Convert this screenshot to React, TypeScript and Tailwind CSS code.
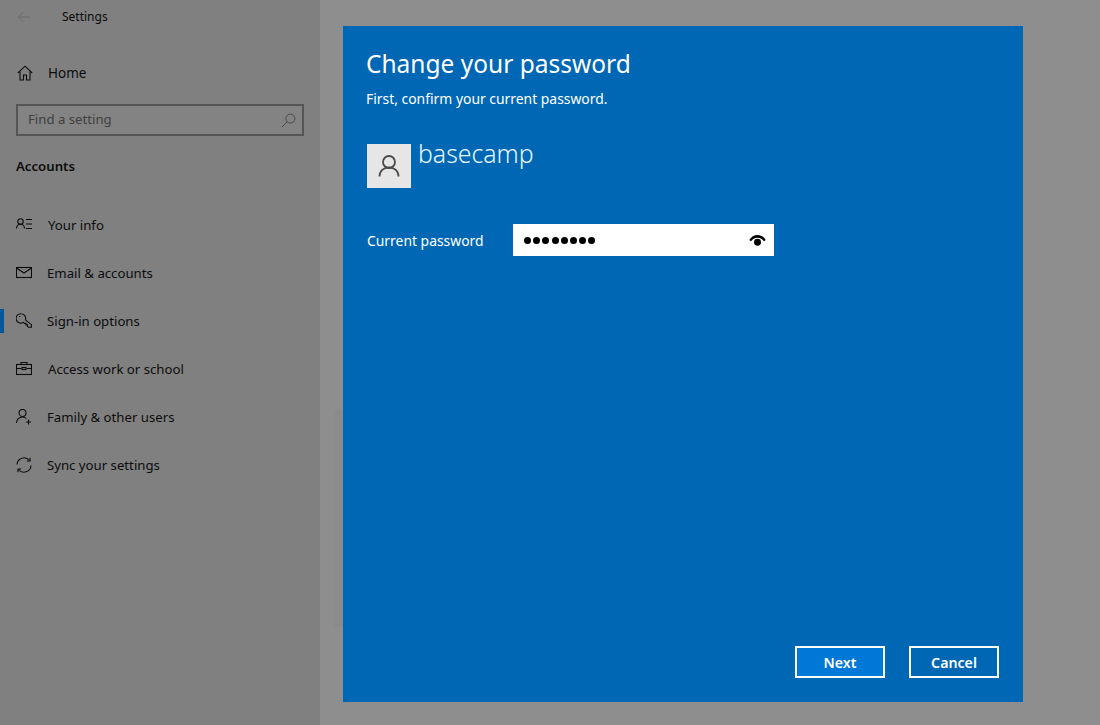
import { ReactNode } from 'react';

function Icon({ children, className }: { children: ReactNode; className?: string }) {
  return (
    <svg
      viewBox="0 0 16 16"
      fill="none"
      stroke="currentColor"
      strokeWidth="1.1"
      className={className ?? 'h-4 w-4 shrink-0 text-[#0c0c0c]'}
    >
      {children}
    </svg>
  );
}

const navItems: { label: string; icon: ReactNode; active?: boolean; textLeft: string }[] = [
  {
    label: 'Your info',
    textLeft: 'pl-[16px]',
    icon: (
      <Icon>
        <circle cx="4.5" cy="4.5" r="2.7" />
        <path d="M0.500 11.500c0-2.500 1.800-4.300 4-4.300s4 1.800 4 4.300" />
        <path d="M10 2.500h6M10 7h6M10 11.500h6" />
      </Icon>
    ),
  },
  {
    label: 'Email & accounts',
    textLeft: 'pl-[15px]',
    icon: (
      <Icon>
        <rect x="0.5" y="2.5" width="15" height="10" />
        <path d="M0.5 3l7.5 5 7.5-5" />
      </Icon>
    ),
  },
  {
    label: 'Sign-in options',
    textLeft: 'pl-[15px]',
    active: true,
    icon: (
      <Icon>
        <path d="M5.500 0.800a4.700 4.700 0 1 0 1.800 8.600l1.200 1h1.500v1.500h1.500v1.500l1 .900h2.900v-2.600L9.500 6.800A4.700 4.700 0 0 0 5.500.8z" />
        <path d="M3 3.500h1.500" />
      </Icon>
    ),
  },
  {
    label: 'Access work or school',
    textLeft: 'pl-[16px]',
    icon: (
      <Icon>
        <rect x="0.5" y="3.5" width="15" height="10" />
        <path d="M5 3.500V1.500h6v2" />
        <path d="M0.500 7.500h5M10.500 7.500h5" />
        <rect x="6" y="6.500" width="4" height="2" />
      </Icon>
    ),
  },
  {
    label: 'Family & other users',
    textLeft: 'pl-[15px]',
    icon: (
      <Icon>
        <circle cx="6.500" cy="4" r="3.500" />
        <path d="M0.500 14c0-3.400 2.700-6 6-6 1.500 0 2.800.5 3.800 1.400" />
        <path d="M12.500 10.500v5M10 13h5" />
      </Icon>
    ),
  },
  {
    label: 'Sync your settings',
    textLeft: 'pl-[15px]',
    icon: (
      <Icon>
        <path d="M1 7.500A7 7 0 0 1 13.500 3.500" />
        <path d="M14 .8v3.200h-3.200" />
        <path d="M15 8.500A7 7 0 0 1 2.500 12.500" />
        <path d="M2 15.200V12h3.200" />
      </Icon>
    ),
  },
];

function Sidebar() {
  return (
    <div className="w-[320px] h-full shrink-0 bg-[#808080] text-[#0c0c0c] flex flex-col">
      <div className="h-[32px] flex items-center pl-[17px] pt-[2px]">
        <svg viewBox="0 0 16 16" fill="none" stroke="#666" strokeWidth="1" className="h-[14px] w-[14px] mr-[31px]">
          <path d="M15 8H1.500M7.500 2L1.500 8l6 6" />
        </svg>
        <span className="text-[12px]">Settings</span>
      </div>
      <div className="h-[48px] mt-[17px] flex items-center pl-[17px]">
        <Icon className="h-[16px] w-[16px] shrink-0 text-[#0c0c0c]">
          <path d="M0.800 8L8 1.200 15.200 8" />
          <path d="M3 6.500v8.500h3.500v-5h3v5H13V6.500" />
        </Icon>
        <span className="pl-[15px] text-[13.500px]">Home</span>
      </div>
      <div className="mx-[16px] mt-[7px] h-[32px] border-2 border-[#555] bg-[#838383] flex items-center justify-between pl-[10px] pr-[6px]">
        <span className="text-[13.200px] leading-[20px] -mt-[3px] text-[#3f3f3f]">Find a setting</span>
        <svg viewBox="0 0 16 16" fill="none" stroke="#444" strokeWidth="1" className="h-[15px] w-[15px]">
          <circle cx="10" cy="6" r="4.800" />
          <path d="M6.500 9.500L1 15" />
        </svg>
      </div>
      <div className="mt-[20px] pl-[16px] text-[13.200px] font-semibold leading-[20px]">Accounts</div>
      <div className="mt-[25px] flex flex-col">
        {navItems.map((item) => (
          <div key={item.label} className="relative h-[48px] flex items-center pl-[16px]">
            {item.active && <div className="absolute left-0 top-[12px] h-[24px] w-[4px] bg-[#00579b]" />}
            {item.icon}
            <span className={`${item.textLeft} text-[13.200px] leading-[20px]`}>{item.label}</span>
          </div>
        ))}
      </div>
    </div>
  );
}

function PasswordDialog() {
  return (
    <div className="w-[680px] h-[676px] bg-[#0067b5] text-white flex flex-col pl-[23px] pr-[24px] pt-[20px] pb-[24px]">
      <h1 className="text-[24.500px] leading-[36px] font-normal">Change your password</h1>
      <p className="text-[13.900px] leading-[20px] mt-[7px]">First, confirm your current password.</p>
      <div className="flex mt-[35px] pl-[1px]">
        <div className="w-[44px] h-[44px] bg-[#e6e6e6] flex items-center justify-center">
          <svg viewBox="0 0 24 24" fill="none" stroke="#4a4a4a" strokeWidth="1.800" className="w-[24px] h-[24px]">
            <circle cx="12" cy="8" r="6" />
            <path d="M2.500 22.500c0-5.500 4-9 9.500-9s9.500 3.500 9.500 9" />
          </svg>
        </div>
        <span className="pl-[7px] text-[24.800px] leading-[18px] font-light text-[#e8f6ff]">basecamp</span>
      </div>
      <div className="flex items-center mt-[36px] pl-[1px]">
        <span className="w-[146px] text-[13.900px] leading-[20px] mt-[1px]">Current password</span>
        <div className="w-[261px] h-[32px] bg-white flex items-center justify-between pl-[11px] pr-[8px]">
          <div className="flex gap-[2.200px]">
            {Array.from({ length: 8 }).map((_, i) => (
              <span key={i} className="w-[7px] h-[7px] rounded-full bg-black" />
            ))}
          </div>
          <svg viewBox="0 0 18 12" className="w-[17px] h-[11px]" fill="#000">
            <path d="M0 5.500C2 2 5.300 0 9 0s7 2 9 5.500l-2 1.300C14.300 4.300 12 3 9 3S3.700 4.300 2 6.800z" />
            <circle cx="9" cy="7.800" r="3.800" />
          </svg>
        </div>
      </div>
      <div className="mt-auto flex justify-end gap-[24px]">
        <button className="w-[90px] h-[32px] pt-[1px] border-2 border-white bg-[#0078d7] text-[14.200px] font-semibold">Next</button>
        <button className="w-[90px] h-[32px] pt-[1px] border-2 border-white text-[14.200px] font-semibold">Cancel</button>
      </div>
    </div>
  );
}

export default function App() {
  return (
    <div className="w-[1100px] h-[725px] flex bg-[#8e8e8e] overflow-hidden font-['Noto_Sans',sans-serif]">
      <Sidebar />
      <div className="relative flex-1 pl-[23px] pt-[26px]">
        <div className="absolute left-[14px] top-[410px] h-[217px] w-[9px] bg-[#8b8b8b]" />
        <PasswordDialog />
      </div>
    </div>
  );
}
